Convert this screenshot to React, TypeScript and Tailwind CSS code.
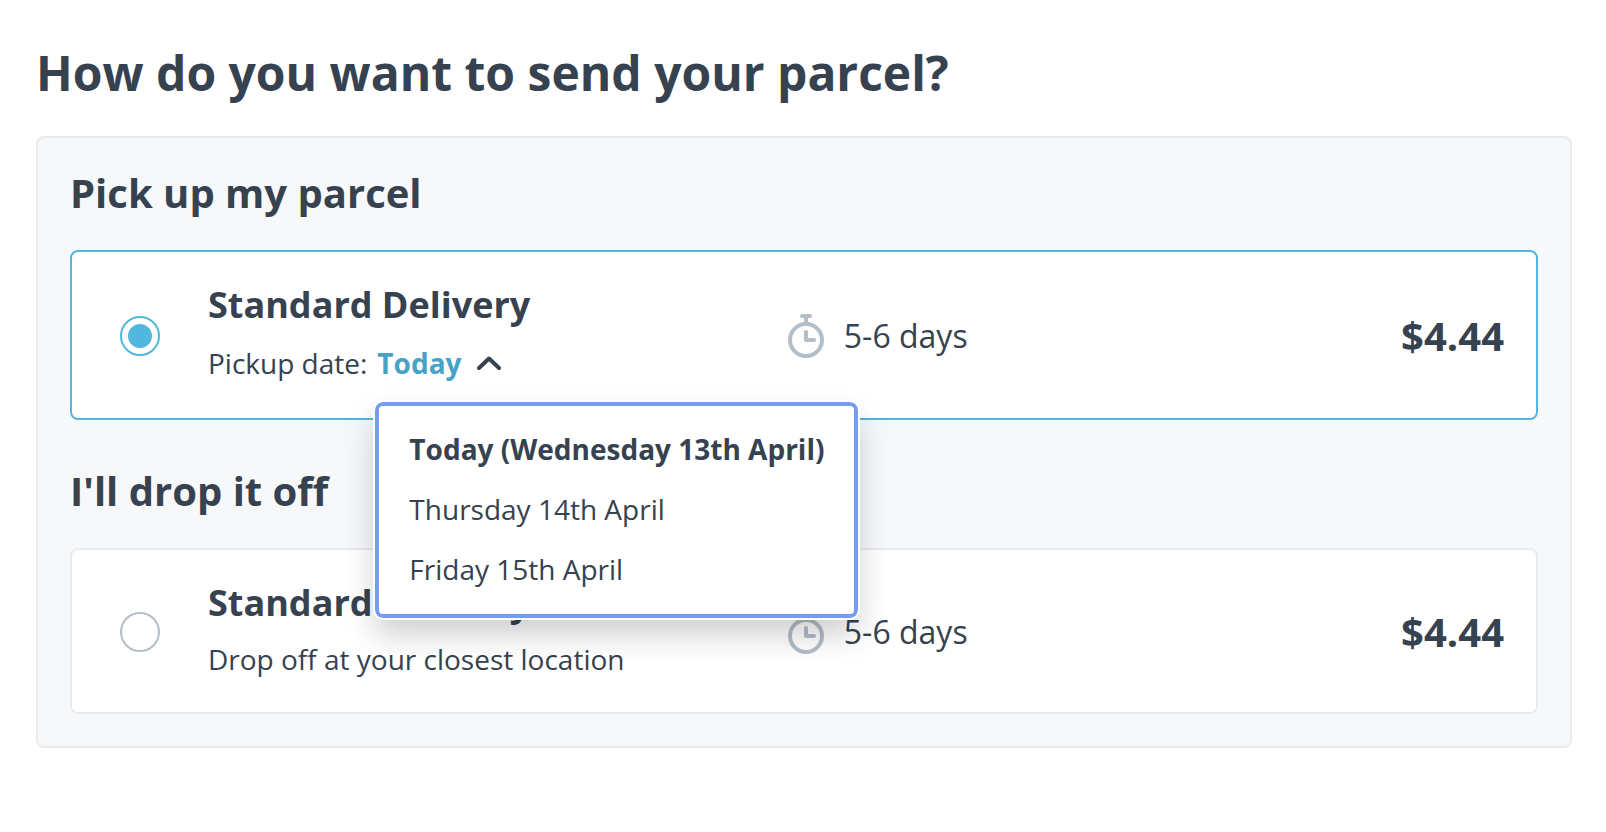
import { useState, type ReactNode } from 'react'

const PICKUP_DATES = [
  { id: 'today', short: 'Today', label: 'Today (Wednesday 13th April)' },
  { id: 'thursday', short: 'Thursday', label: 'Thursday 14th April' },
  { id: 'friday', short: 'Friday', label: 'Friday 15th April' },
]

function StopwatchIcon() {
  return (
    <svg width="36" height="44" viewBox="0 0 36 44" fill="none" stroke="#b4bec9" strokeWidth="4" className="shrink-0" aria-hidden="true">
      <circle cx="18" cy="26" r="16" />
      <path d="M14 2h8" strokeLinecap="round" />
      <path d="M18 2v8" />
      <path d="M18 18v8h8" strokeLinecap="round" strokeLinejoin="round" />
    </svg>
  )
}

function Chevron({ open }: { open: boolean }) {
  return (
    <svg
      width="24"
      height="14"
      viewBox="0 0 24 14"
      fill="none"
      stroke="#36424f"
      strokeWidth="4"
      strokeLinecap="round"
      strokeLinejoin="round"
      className={open ? '' : 'rotate-180'}
      aria-hidden="true"
    >
      <path d="M2 12l10-9.5L22 12" />
    </svg>
  )
}

function PickupDate() {
  const [open, setOpen] = useState(true)
  const [selected, setSelected] = useState(PICKUP_DATES[0])

  return (
    <div className="flex gap-2.5 py-0.5">
      <span>Pickup date:</span>
      <div className="relative">
        <button
          type="button"
          aria-expanded={open}
          onClick={() => setOpen(!open)}
          className="flex items-center gap-4 font-bold text-[#48a2c6]"
        >
          {selected.short}
          <Chevron open={open} />
        </button>

        {open && (
          <ul className="absolute -left-0.5 top-full z-10 mt-[18px] rounded-lg border-4 border-[#759cf3] bg-white pt-[13px] pb-[15px] shadow-[0_16px_32px_rgba(0,0,0,0.2)] outline-2 outline-white">
            {PICKUP_DATES.map((date) => (
              <li key={date.id}>
                <button
                  type="button"
                  onClick={() => {
                    setSelected(date)
                    setOpen(false)
                  }}
                  className={`flex h-15 w-full items-center whitespace-nowrap px-[30px] ${date.id === selected.id ? 'font-bold' : ''}`}
                >
                  {date.label}
                </button>
              </li>
            ))}
          </ul>
        )}
      </div>
    </div>
  )
}

interface DeliveryOptionProps {
  id: string
  title: string
  duration: string
  price: string
  checked: boolean
  onSelect: () => void
  children: ReactNode
}

function DeliveryOption({ id, title, duration, price, checked, onSelect, children }: DeliveryOptionProps) {
  return (
    <div
      className={`flex items-center gap-12 rounded-lg border-2 bg-white pt-[34px] pb-8 pl-12 pr-8 ${checked ? 'border-[#52b7de]' : 'border-[#e9ecef]'}`}
    >
      <input
        type="radio"
        id={id}
        name="delivery"
        checked={checked}
        onChange={onSelect}
        className="grid size-10 shrink-0 appearance-none place-items-center rounded-full border-2 border-[#b4bec9] bg-white before:size-6 before:rounded-full checked:border-[#52b7de] checked:before:bg-[#52b7de]"
      />
      <div className="grid flex-1 grid-cols-[17fr_21fr] items-center">
        <div>
          <label htmlFor={id} className="block text-4xl leading-[38px] font-bold">
            {title}
          </label>
          <div className="mt-4 text-[28px] leading-[42px]">{children}</div>
        </div>
        <div className="flex items-center justify-between">
          <div className="flex items-center gap-5 text-[32px] leading-12">
            <StopwatchIcon />
            <span>{duration}</span>
          </div>
          <span className="text-[40px] leading-12 font-bold">{price}</span>
        </div>
      </div>
    </div>
  )
}

export default function App() {
  const [option, setOption] = useState('pickup')

  return (
    <main className="min-h-screen bg-white pt-10 pr-[34px] pb-20 pl-9 font-['Open_Sans',sans-serif] text-[#36424f]">
      <h1 className="mb-[30px] text-5xl leading-[66px] font-bold">How do you want to send your parcel?</h1>

      <div className="flex flex-col gap-12 rounded-lg border-2 border-[#e9ecef] bg-[#f7f8fa] p-8">
        <section>
          <h2 className="mb-[34px] text-[40px] leading-[46px] font-bold">Pick up my parcel</h2>
          <DeliveryOption
            id="pickup"
            title="Standard Delivery"
            duration="5-6 days"
            price="$4.44"
            checked={option === 'pickup'}
            onSelect={() => setOption('pickup')}
          >
            <PickupDate />
          </DeliveryOption>
        </section>

        <section>
          <h2 className="mb-[34px] text-[40px] leading-[46px] font-bold">I'll drop it off</h2>
          <DeliveryOption
            id="dropoff"
            title="Standard Delivery"
            duration="5-6 days"
            price="$4.44"
            checked={option === 'dropoff'}
            onSelect={() => setOption('dropoff')}
          >
            <p>Drop off at your closest location</p>
          </DeliveryOption>
        </section>
      </div>
    </main>
  )
}
